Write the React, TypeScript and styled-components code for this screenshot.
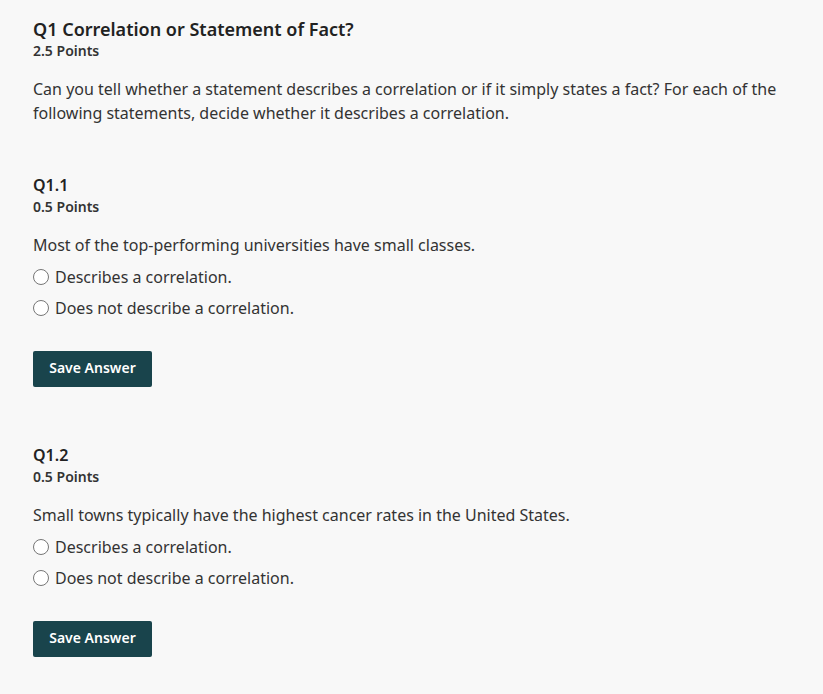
import React from 'react'
import styled, { createGlobalStyle } from 'styled-components'

const GlobalStyle = createGlobalStyle`
  html, body {
    margin: 0;
    padding: 0;
    background: #f8f8f8;
  }
  body {
    font-family: "Noto Sans", "Open Sans", sans-serif;
    color: #333333;
  }
`

const Page = styled.main`
  padding: 17px 33px 40px 33px;
  max-width: 760px;
`

const Header = styled.header`
  display: flex;
  flex-direction: column;
`

const Title = styled.h1`
  margin: 0;
  font-size: 18px;
  line-height: 24px;
  font-weight: 600;
  color: #222;
`

const SubTitle = styled.h2`
  margin: 0;
  font-size: 16px;
  line-height: 24px;
  font-weight: 600;
  color: #222;
`

const Points = styled.div`
  padding-top: 1px;
  font-size: 14px;
  line-height: 17px;
  font-weight: 600;
  color: #333;
`

const Intro = styled.p`
  margin: 18px 0 0 0;
  font-size: 16px;
  line-height: 24px;
`

const Question = styled.section<{ $first?: boolean }>`
  margin-top: ${p => (p.$first ? '48px' : '56px')};
  display: flex;
  flex-direction: column;
`

const Prompt = styled.p`
  margin: 18px 0 0 0;
  font-size: 16px;
  line-height: 24px;
`

const Options = styled.div`
  display: flex;
  flex-direction: column;
  gap: 7px;
  margin-top: 8px;
`

const Option = styled.label`
  display: flex;
  align-items: center;
  gap: 6px;
  font-size: 16px;
  line-height: 24px;
  cursor: pointer;
`

const Radio = styled.span`
  width: 16px;
  height: 16px;
  box-sizing: border-box;
  border-radius: 50%;
  border: 1px solid #767676;
  background: #fff;
  flex-shrink: 0;
`

const SaveButton = styled.button`
  align-self: flex-start;
  margin-top: 31px;
  width: 119px;
  height: 36px;
  padding: 0 0 2px 0;
  border: none;
  border-radius: 2px;
  background: #19444c;
  color: #fff;
  font-family: "Noto Sans", "Open Sans", sans-serif;
  font-size: 14px;
  line-height: 18px;
  font-weight: 600;
  cursor: pointer;
`

const questions = [
  {
    id: 'Q1.1',
    points: '0.5 Points',
    prompt: 'Most of the top-performing universities have small classes.',
  },
  {
    id: 'Q1.2',
    points: '0.5 Points',
    prompt: 'Small towns typically have the highest cancer rates in the United States.',
  },
]

const choices = ['Describes a correlation.', 'Does not describe a correlation.']

export default function App() {
  return (
    <>
      <GlobalStyle />
      <Page>
        <Header>
          <Title>Q1 Correlation or Statement of Fact?</Title>
          <Points>2.5 Points</Points>
        </Header>
        <Intro>
          Can you tell whether a statement describes a correlation or if it simply states a fact? For each of the
          following statements, decide whether it describes a correlation.
        </Intro>

        {questions.map((q, i) => (
          <Question key={q.id} $first={i === 0}>
            <SubTitle>{q.id}</SubTitle>
            <Points>{q.points}</Points>
            <Prompt>{q.prompt}</Prompt>
            <Options>
              {choices.map(c => (
                <Option key={c}>
                  <Radio />
                  {c}
                </Option>
              ))}
            </Options>
            <SaveButton>Save Answer</SaveButton>
          </Question>
        ))}
      </Page>
    </>
  )
}
